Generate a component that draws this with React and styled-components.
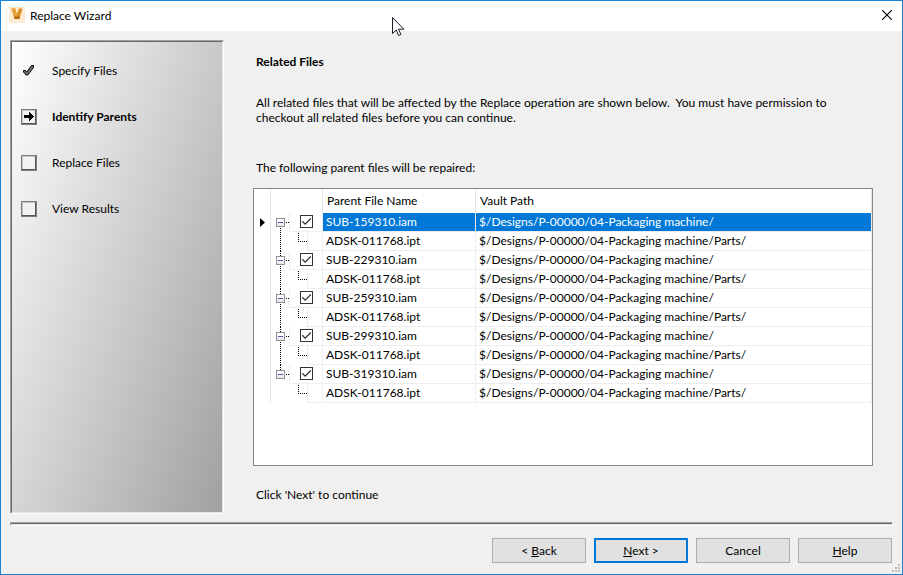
import React, { useState } from 'react'
import styled, { createGlobalStyle } from 'styled-components'

const GlobalStyle = createGlobalStyle`
  * {
    box-sizing: border-box;
  }

  body {
    margin: 0;
    background: #f0f0f0;
    color: #000;
    font-family: Lato, "Open Sans", sans-serif;
    font-size: 12px;
    line-height: 15px;
  }

  button, input {
    margin: 0;
    font: inherit;
    color: inherit;
  }
`

const Window = styled.div`
  position: relative;
  display: flex;
  flex-direction: column;
  min-height: 100vh;
  border: 1px solid #1883d7;
  background: #f0f0f0;
`

const TitleBar = styled.header`
  display: flex;
  align-items: center;
  height: 30px;
  padding: 0 8px 2px;
  background: #fff;
`

const Title = styled.h1`
  flex: 1;
  margin: 0 0 0 5px;
  font-size: 12px;
  font-weight: 400;
`

const CloseButton = styled.button`
  display: flex;
  padding: 2px;
  border: none;
  background: none;
`

const Body = styled.div`
  flex: 1;
  display: flex;
  padding: 9px 9px 8px;
`

const Sidebar = styled.nav`
  flex: none;
  width: 214px;
  border: 1px solid;
  border-color: #a0a0a0 #fff #fff #a0a0a0;
  background: linear-gradient(109deg, #fff, #a0a0a0);
`

const Steps = styled.ol`
  display: flex;
  flex-direction: column;
  gap: 30px;
  height: 100%;
  margin: 0;
  padding: 21px 9px;
  border: 1px solid;
  border-color: #696969 #e3e3e3 #e3e3e3 #696969;
  list-style: none;
`

const Step = styled.li`
  display: flex;
  align-items: flex-start;
  gap: 15px;
  height: 16px;
  font-weight: ${({ $active }) => ($active ? 700 : 400)};
`

const Content = styled.main`
  flex: 1;
  display: flex;
  flex-direction: column;
  min-width: 0;
  margin-left: 29px;
  padding: 14px 20px 12px 0;
`

const Heading = styled.h2`
  margin: 0 3px 26px;
  font-size: 12px;
  line-height: 15px;
  font-weight: 700;
`

const Text = styled.p`
  margin: 0 3px ${({ $gap }) => $gap || 0};
  white-space: pre-wrap;
`

const GridFrame = styled.div`
  flex: 1;
  margin-bottom: 21px;
  border: 1px solid #828790;
  background: #fff;
`

const Grid = styled.table`
  width: 100%;
  table-layout: fixed;
  border-collapse: separate;
  border-spacing: 0;
`

const Col = styled.col`
  width: ${({ $width }) => $width};
`

const HeadCell = styled.th`
  height: 24px;
  padding: 0 4px 1px;
  border-right: 1px solid ${({ $open }) => ($open ? 'transparent' : '#e5e5e5')};
  font-weight: 400;
  text-align: left;
`

const Cell = styled.td`
  height: 19px;
  padding: 0 3px;
  border-right: 1px solid #ededed;
  border-bottom: 1px solid #ededed;
  line-height: 18px;
  white-space: nowrap;
  background: ${({ $selected }) => ($selected ? '#0078d7' : 'transparent')};
  background-clip: padding-box;
  color: ${({ $selected }) => ($selected ? '#fff' : '#000')};
`

const MarkerCell = styled.td`
  height: 19px;
  padding: 0;
  border-right: 1px solid #e5e5e5;
`

const TreeCell = styled.td`
  height: 19px;
  padding: 0;
  border-right: 1px solid ${({ $line }) => ($line ? '#ededed' : 'transparent')};
`

const CheckCell = styled(Cell)`
  padding: 0 0 1px;
`

const BranchCell = styled.td`
  height: 19px;
  padding: 0;
  border-right: 1px solid #ededed;
`

const Branch = styled.div`
  display: flex;
  height: 19px;
`

const BranchGap = styled.div`
  flex: 1;
  border-left: 1px solid #ededed;
  border-bottom: 1px solid #ededed;
`

const Drawing = styled.svg`
  display: block;
  flex: none;
`

const CheckWrap = styled.label`
  display: grid;
  width: 13px;
  height: 13px;
  margin: 0 auto;

  > * {
    grid-area: 1 / 1;
  }

  svg {
    pointer-events: none;
  }
`

const CheckInput = styled.input`
  appearance: none;
  width: 13px;
  height: 13px;
  border: 1px solid #333;
  background: #fff;

  &:not(:checked) + svg {
    visibility: hidden;
  }
`

const Separator = styled.hr`
  width: auto;
  height: 4px;
  margin: 0 9px;
  border: 1px solid;
  border-color: #a0a0a0 #fff #fff #a0a0a0;
  background: linear-gradient(#696969 50%, #e3e3e3 50%);
`

const Footer = styled.footer`
  display: flex;
  justify-content: flex-end;
  gap: 8px;
  padding: 12px 10px 11px;
`

const Button = styled.button`
  width: 94px;
  height: 25px;
  padding: 0;
  border: ${({ $primary }) => ($primary ? '2px solid #0078d7' : '1px solid #adadad')};
  background: #e1e1e1;
`

const Grip = styled.svg`
  position: absolute;
  right: 2px;
  bottom: 2px;
`

const Pointer = styled.svg`
  position: absolute;
  left: 391px;
  top: 16px;
  pointer-events: none;
`

const steps = [
  { label: 'Specify Files', state: 'done' },
  { label: 'Identify Parents', state: 'active' },
  { label: 'Replace Files', state: 'todo' },
  { label: 'View Results', state: 'todo' },
]

const files = ['SUB-159310.iam', 'SUB-229310.iam', 'SUB-259310.iam', 'SUB-299310.iam', 'SUB-319310.iam']
const child = 'ADSK-011768.ipt'
const vaultPath = '$/Designs/P-00000/04-Packaging machine/'

const StepIcon = ({ state }) => {
  if (state === 'done') {
    return (
      <Drawing width="16" height="16" viewBox="0 0 16 16" aria-hidden="true">
        <path d="M2.5 7.5h1.8l1.4 1.6L10.5 2.5h2v2L6.8 12H5.2L2.5 9z" fill="#707070" stroke="#000" />
      </Drawing>
    )
  }
  return (
    <Drawing width="16" height="16" viewBox="0 0 16 16" shapeRendering="crispEdges" aria-hidden="true">
      <rect width="16" height="16" fill="#7b7f7b" />
      <rect x="1" y="1" width="14" height="14" fill="#c4c6c4" />
      <rect x="2" y="2" width="12" height="12" fill="#f2f2f2" />
      <path d="M14.5 1v14M1 14.5h14" stroke="#555955" />
      {state === 'active' && (
        <path d="M3 6h5V3h1v1h1v1h1v1h1v1h1v1h-1v1h-1v1h-1v1H9v1H8V9H3z" fill="#000" />
      )}
    </Drawing>
  )
}

const TreeNode = ({ first, last }) => (
  <Drawing width="18" height="19" viewBox="0 0 18 19" shapeRendering="crispEdges" aria-hidden="true">
    {!first && <path d="M9.5 0v5" stroke="#000" strokeDasharray="1 1" />}
    {!last && <path d="M9.5 15v4" stroke="#000" strokeDasharray="1 1" />}
    <path d="M15 9.5h3" stroke="#000" strokeDasharray="1 1" />
    <rect x="5.5" y="5.5" width="8" height="8" rx="1" fill="#ececec" stroke="#919191" />
    <rect x="6" y="6" width="7" height="3" fill="#fff" />
    <path d="M7 9.5h5" stroke="#4b63a7" />
  </Drawing>
)

const Checkbox = ({ label }) => {
  const [checked, setChecked] = useState(true)

  return (
    <CheckWrap>
      <CheckInput
        type="checkbox"
        aria-label={label}
        checked={checked}
        onChange={(e) => setChecked(e.target.checked)}
      />
      <Drawing width="13" height="13" viewBox="0 0 13 13" aria-hidden="true">
        <path d="M2.3 6.3l2.9 2.9 5.6-5.7" fill="none" stroke="#333" strokeWidth="1.3" />
      </Drawing>
    </CheckWrap>
  )
}

const FileRows = ({ name, first, last }) => (
  <>
    <tr>
      <MarkerCell>
        {first && (
          <Drawing width="16" height="19" viewBox="0 0 16 19" aria-hidden="true">
            <path d="M6 5v9l5-4.5z" fill="#000" />
          </Drawing>
        )}
      </MarkerCell>
      <TreeCell $line>
        <TreeNode first={first} last={last} />
      </TreeCell>
      <CheckCell>
        <Checkbox label={name} />
      </CheckCell>
      <Cell $selected={first}>{name}</Cell>
      <Cell $selected={first}>{vaultPath}</Cell>
    </tr>
    <tr>
      <MarkerCell />
      <TreeCell>
        {!last && (
          <Drawing width="18" height="19" viewBox="0 0 18 19" shapeRendering="crispEdges" aria-hidden="true">
            <path d="M9.5 0v19" stroke="#000" strokeDasharray="1 1" />
          </Drawing>
        )}
      </TreeCell>
      <BranchCell>
        <Branch>
          <Drawing width="17" height="19" viewBox="0 0 17 19" shapeRendering="crispEdges" aria-hidden="true">
            <path d="M8.5 1v9M8 9.5h9" fill="none" stroke="#000" strokeDasharray="1 1" />
          </Drawing>
          <BranchGap />
        </Branch>
      </BranchCell>
      <Cell>{child}</Cell>
      <Cell>{vaultPath}Parts/</Cell>
    </tr>
  </>
)

const App = () => {
  return (
    <Window>
      <GlobalStyle />
      <TitleBar>
        <Drawing width="16" height="16" viewBox="0 0 16 16" aria-hidden="true">
          <rect width="16" height="16" fill="#fdebd3" />
          <path d="M2.5 1.5h3.7L8 7.5l1.8-6h3.7L10.3 12H5.7z" fill="#d98c1f" />
          <path d="M2.5 1.5h3.7L8 7.5V12H5.7z" fill="#e5a23c" />
          <path d="M5 9.5h6L10.3 12H5.7z" fill="#b56a14" />
        </Drawing>
        <Title>Replace Wizard</Title>
        <CloseButton aria-label="Close">
          <Drawing width="10" height="10" viewBox="0 0 10 10">
            <path d="M0 0l10 10M10 0L0 10" stroke="#000" strokeWidth="1.1" />
          </Drawing>
        </CloseButton>
      </TitleBar>

      <Body>
        <Sidebar>
          <Steps>
            {steps.map((step) => (
              <Step key={step.label} $active={step.state === 'active'}>
                <StepIcon state={step.state} />
                {step.label}
              </Step>
            ))}
          </Steps>
        </Sidebar>

        <Content>
          <Heading>Related Files</Heading>
          <Text $gap="35px">
            {'All related files that will be affected by the Replace operation are shown below.  You must have permission to checkout all related files before you can continue.'}
          </Text>
          <Text $gap="13px">The following parent files will be repaired:</Text>
          <GridFrame>
            <Grid>
              <colgroup>
                <Col $width="17px" />
                <Col $width="19px" />
                <Col $width="33px" />
                <Col $width="153px" />
                <Col />
              </colgroup>
              <thead>
                <tr>
                  <HeadCell />
                  <HeadCell $open />
                  <HeadCell />
                  <HeadCell>Parent File Name</HeadCell>
                  <HeadCell>Vault Path</HeadCell>
                </tr>
              </thead>
              <tbody>
                {files.map((name, i) => (
                  <FileRows key={name} name={name} first={i === 0} last={i === files.length - 1} />
                ))}
              </tbody>
            </Grid>
          </GridFrame>
          <Text>Click 'Next' to continue</Text>
        </Content>
      </Body>

      <Separator />
      <Footer>
        <Button>&lt; <u>B</u>ack</Button>
        <Button $primary><u>N</u>ext &gt;</Button>
        <Button>Cancel</Button>
        <Button><u>H</u>elp</Button>
      </Footer>

      <Grip width="8" height="8" viewBox="0 0 8 8" shapeRendering="crispEdges" aria-hidden="true">
        <path d="M6 0h2v2H6zM3 3h2v2H3zM6 3h2v2H6zM0 6h2v2H0zM3 6h2v2H3zM6 6h2v2H6z" fill="#bfbfbf" />
      </Grip>
      <Pointer width="13" height="20" viewBox="0 0 13 20" aria-hidden="true">
        <path d="M.5.5v16l3.7-3.5 2.4 5.5 2.3-1-2.4-5.3h5.3z" fill="#fff" stroke="#1a1a2a" />
      </Pointer>
    </Window>
  )
}

export default App
